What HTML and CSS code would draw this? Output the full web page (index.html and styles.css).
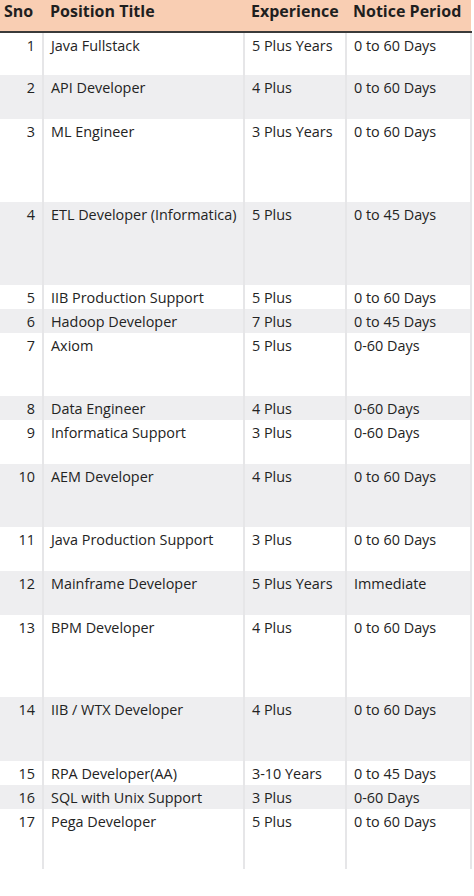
FILE: index.html
```html
<!DOCTYPE html>
<html>
<head>
<meta charset="utf-8">
<link rel="stylesheet" href="styles.css">
</head>
<body>
<table class="grid">
  <colgroup>
    <col class="c-sno"><col class="c-title"><col class="c-exp"><col class="c-notice">
  </colgroup>
  <thead>
    <tr class="head">
      <th class="sno">Sno</th><th>Position Title</th><th>Experience</th><th>Notice Period</th>
    </tr>
  </thead>
  <tbody>
    <tr class="h43"><td class="sno">1</td><td>Java Fullstack</td><td>5 Plus Years</td><td>0 to 60 Days</td></tr>
    <tr class="h44 alt"><td class="sno">2</td><td>API Developer</td><td>4 Plus</td><td>0 to 60 Days</td></tr>
    <tr class="h83"><td class="sno">3</td><td>ML Engineer</td><td>3 Plus Years</td><td>0 to 60 Days</td></tr>
    <tr class="h83 alt"><td class="sno">4</td><td>ETL Developer (Informatica)</td><td>5 Plus</td><td>0 to 45 Days</td></tr>
    <tr class="h24"><td class="sno">5</td><td>IIB Production Support</td><td>5 Plus</td><td>0 to 60 Days</td></tr>
    <tr class="h24 alt"><td class="sno">6</td><td>Hadoop Developer</td><td>7 Plus</td><td>0 to 45 Days</td></tr>
    <tr class="h63"><td class="sno">7</td><td>Axiom</td><td>5 Plus</td><td>0-60 Days</td></tr>
    <tr class="h24 alt"><td class="sno">8</td><td>Data Engineer</td><td>4 Plus</td><td>0-60 Days</td></tr>
    <tr class="h44"><td class="sno">9</td><td>Informatica Support</td><td>3 Plus</td><td>0-60 Days</td></tr>
    <tr class="h63 alt"><td class="sno">10</td><td>AEM Developer</td><td>4 Plus</td><td>0 to 60 Days</td></tr>
    <tr class="h44"><td class="sno">11</td><td>Java Production Support</td><td>3 Plus</td><td>0 to 60 Days</td></tr>
    <tr class="h44 alt"><td class="sno">12</td><td>Mainframe Developer</td><td>5 Plus Years</td><td>Immediate</td></tr>
    <tr class="h82"><td class="sno">13</td><td>BPM Developer</td><td>4 Plus</td><td>0 to 60 Days</td></tr>
    <tr class="h64 alt"><td class="sno">14</td><td>IIB / WTX Developer</td><td>4 Plus</td><td>0 to 60 Days</td></tr>
    <tr class="h24"><td class="sno">15</td><td>RPA Developer(AA)</td><td>3-10 Years</td><td>0 to 45 Days</td></tr>
    <tr class="h24 alt"><td class="sno">16</td><td>SQL with Unix Support</td><td>3 Plus</td><td>0-60 Days</td></tr>
    <tr class="h60"><td class="sno">17</td><td>Pega Developer</td><td>5 Plus</td><td>0 to 60 Days</td></tr>
  </tbody>
</table>
</body>
</html>
```

FILE: styles.css
```css
html, body {
  margin: 0;
  padding: 0;
  background: #ffffff;
}
body {
  font-family: "Open Sans", "Noto Sans", sans-serif;
  color: #232323;
}
.grid {
  width: 471px;
  border-collapse: collapse;
  table-layout: fixed;
}
.c-sno { width: 43px; }
.c-title { width: 201px; }
.c-exp { width: 102px; }
.c-notice { width: 125px; }

.head {
  height: 32px;
  background: #f9ceb3;
}
.head th {
  font-size: 16px;
  line-height: 22px;
  font-weight: 700;
  text-align: left;
  padding: 0 0 0 7px;
  border-bottom: 2px solid #3a3a3a;
  color: #1f1f1f;
  vertical-align: top;
  white-space: nowrap;
}
.head th.sno {
  padding-left: 4px;
}
td {
  font-size: 14.4px;
  line-height: 20px;
  padding: 3px 7px 0 7px;
  vertical-align: top;
  border-left: 2px solid #e6e6e8;
  white-space: nowrap;
  overflow: hidden;
}
td.sno {
  text-align: right;
  border-left: none;
  padding-right: 7px;
}
tbody tr td:last-child {
  border-right: 2px solid #e6e6e8;
}
.alt { background: #eeeef0; }

.h24 { height: 24px; }
.h43 { height: 43px; }
.h44 { height: 44px; }
.h60 { height: 60px; }
.h63 { height: 63px; }
.h64 { height: 64px; }
.h82 { height: 82px; }
.h83 { height: 83px; }
```
